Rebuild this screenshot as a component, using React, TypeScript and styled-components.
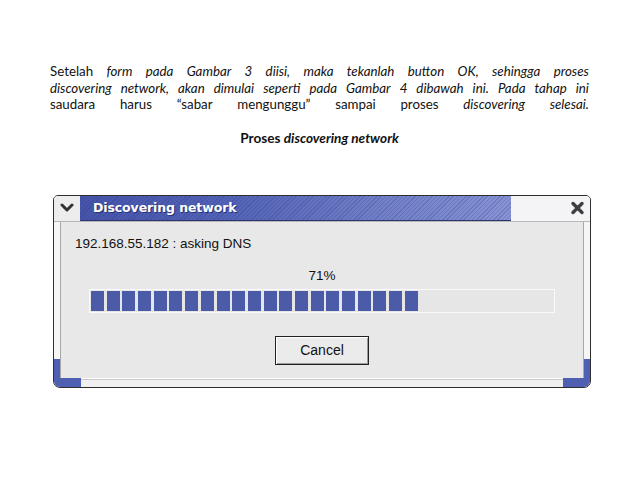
import React from "react";
import styled, { createGlobalStyle } from "styled-components";

const GlobalStyle = createGlobalStyle`
  html, body {
    margin: 0;
    padding: 0;
    background: #ffffff;
  }
`;

const Page = styled.div`
  width: 638px;
  height: 478px;
  box-sizing: border-box;
  padding: 63px 49px 0 50px;
  font-family: Lato, "Open Sans", sans-serif;
  color: #111;
`;

const Paragraph = styled.div`
  font-size: 13.3px;
  line-height: 16.5px;
`;

const Line = styled.div`
  white-space: nowrap;
  display: flex;
  justify-content: space-between;
`;

const Caption = styled.div`
  margin-top: 17px;
  text-align: center;
  font-size: 13.6px;
  line-height: 17px;
  font-weight: 700;
`;

const Window = styled.div`
  margin: 48px 0 0 3px;
  width: 538px;
  height: 193px;
  box-sizing: border-box;
  border: 1px solid #2e2e2e;
  border-radius: 5px 5px 7px 7px;
  background: #f6f6f6;
  display: flex;
  flex-direction: column;
  overflow: hidden;
  position: relative;
  font-family: "Liberation Sans", Arial, sans-serif;
`;

const CornerDot = styled.span<{ $side: "left" | "right" }>`
  position: absolute;
  top: -1px;
  ${(p) => (p.$side === "left" ? "left: -1px;" : "right: -1px;")}
  width: 3px;
  height: 2px;
  background: #1fae7a;
`;

const TitleBar = styled.div`
  height: 25px;
  display: flex;
  align-items: stretch;
  border-bottom: 1px solid #b8b8b8;
`;

const MenuButton = styled.div`
  width: 26px;
  display: flex;
  align-items: center;
  justify-content: center;
  background: #ededed;
`;

const TitleStrip = styled.div`
  width: 431px;
  display: flex;
  align-items: center;
  padding-left: 13px;
  box-sizing: border-box;
  border-bottom: 1px solid #2c3470;
  background:
    repeating-linear-gradient(
      -45deg,
      rgba(40, 50, 120, 0.22) 0px,
      rgba(40, 50, 120, 0.22) 1px,
      rgba(255, 255, 255, 0) 1px,
      rgba(255, 255, 255, 0) 3px
    ),
    linear-gradient(90deg, #4655ab 0%, #5363b6 35%, #7180c8 70%, #8793d4 100%);
`;

const TitleText = styled.span`
  font-family: "DejaVu Sans", Verdana, sans-serif;
  font-weight: 700;
  font-size: 12.5px;
  color: #ffffff;
  text-shadow: 1px 1px 0 #2a3275;
  letter-spacing: -0.1px;
`;

const TitleRest = styled.div`
  flex: 1;
  display: flex;
  align-items: center;
  justify-content: flex-end;
  padding-right: 5px;
  background: #f4f3f5;
`;

const Middle = styled.div`
  flex: 1;
  display: flex;
`;

const SideFrame = styled.div`
  width: 6px;
  background: linear-gradient(180deg, #f6f6f6 0px, #f6f6f6 137px, #4f5fb2 137px);
`;

const Content = styled.div`
  flex: 1;
  background: #e8e8e8;
  border-left: 1px solid #a8a8a8;
  border-right: 1px solid #a8a8a8;
  display: flex;
  flex-direction: column;
  align-items: center;
  padding-top: 14px;
`;

const Status = styled.div`
  align-self: flex-start;
  margin-left: 14px;
  font-size: 13.5px;
  color: #111;
`;

const Percent = styled.div`
  margin-top: 17px;
  font-size: 13.5px;
  color: #111;
`;

const Track = styled.div`
  margin-top: 6px;
  width: 466px;
  height: 24px;
  box-sizing: border-box;
  border: 1px solid #fafafa;
  background: #e6e6e6;
  display: flex;
  gap: 2.7px;
  padding: 1px 0 1px 1px;
`;

const Block = styled.div`
  width: 13px;
  background: #4c5ba8;
`;

const CancelButton = styled.button`
  margin-top: 23px;
  width: 94px;
  height: 29px;
  border: 1px solid #222;
  background: #ebebeb;
  box-shadow: inset 1px 1px 0 #ffffff, inset -1px -1px 0 #9a9a9a;
  font-family: "Liberation Sans", Arial, sans-serif;
  font-size: 14px;
  color: #111;
  padding: 0;
`;

const BottomFrame = styled.div`
  height: 9px;
  display: flex;
`;

const BlueCorner = styled.div<{ $width: number }>`
  width: ${(p) => p.$width}px;
  background: #4f5fb2;
`;

const BottomMid = styled.div`
  flex: 1;
  background: #f0f0f0;
  border-top: 1px solid #ffffff;
  box-shadow: inset 0 1px 0 #c8c8c8;
`;

function Chevron() {
  return (
    <svg width="14" height="10" viewBox="0 0 14 10">
      <path d="M2 2 L7 7 L12 2" fill="none" stroke="#333" strokeWidth="3" strokeLinecap="round" strokeLinejoin="round" />
    </svg>
  );
}

function CloseIcon() {
  return (
    <svg width="15" height="14" viewBox="0 0 15 14">
      <path d="M3 2.5 L12 11.5 M12 2.5 L3 11.5" stroke="#3f3f3f" strokeWidth="3.4" strokeLinecap="round" />
    </svg>
  );
}

const blocks = Array.from({ length: 21 }, (_, i) => i);

export default function App() {
  return (
    <>
      <GlobalStyle />
      <Page>
        <Paragraph>
          <Line>
            <span>Setelah</span>
            <i>form</i>
            <i>pada</i>
            <i>Gambar</i>
            <i>3</i>
            <i>diisi,</i>
            <i>maka</i>
            <i>tekanlah</i>
            <i>button</i>
            <i>OK,</i>
            <i>sehingga</i>
            <i>proses</i>
          </Line>
          <Line>
            <i>discovering</i>
            <i>network,</i>
            <i>akan</i>
            <i>dimulai</i>
            <i>seperti</i>
            <i>pada</i>
            <i>Gambar</i>
            <i>4</i>
            <i>dibawah</i>
            <i>ini.</i>
            <i>Pada</i>
            <i>tahap</i>
            <i>ini</i>
          </Line>
          <Line>
            <span>saudara</span>
            <span>harus</span>
            <span>“sabar</span>
            <span>mengunggu”</span>
            <span>sampai</span>
            <span>proses</span>
            <i>discovering</i>
            <i>selesai.</i>
          </Line>
        </Paragraph>
        <Caption>
          Proses <i>discovering network</i>
        </Caption>
        <Window>
          <CornerDot $side="left" />
          <CornerDot $side="right" />
          <TitleBar>
            <MenuButton>
              <Chevron />
            </MenuButton>
            <TitleStrip>
              <TitleText>Discovering network</TitleText>
            </TitleStrip>
            <TitleRest>
              <CloseIcon />
            </TitleRest>
          </TitleBar>
          <Middle>
            <SideFrame />
            <Content>
              <Status>192.168.55.182 : asking DNS</Status>
              <Percent>71%</Percent>
              <Track>
                {blocks.map((i) => (
                  <Block key={i} />
                ))}
              </Track>
              <CancelButton>Cancel</CancelButton>
            </Content>
            <SideFrame />
          </Middle>
          <BottomFrame>
            <BlueCorner $width={27} />
            <BottomMid />
            <BlueCorner $width={27} />
          </BottomFrame>
        </Window>
      </Page>
    </>
  );
}
